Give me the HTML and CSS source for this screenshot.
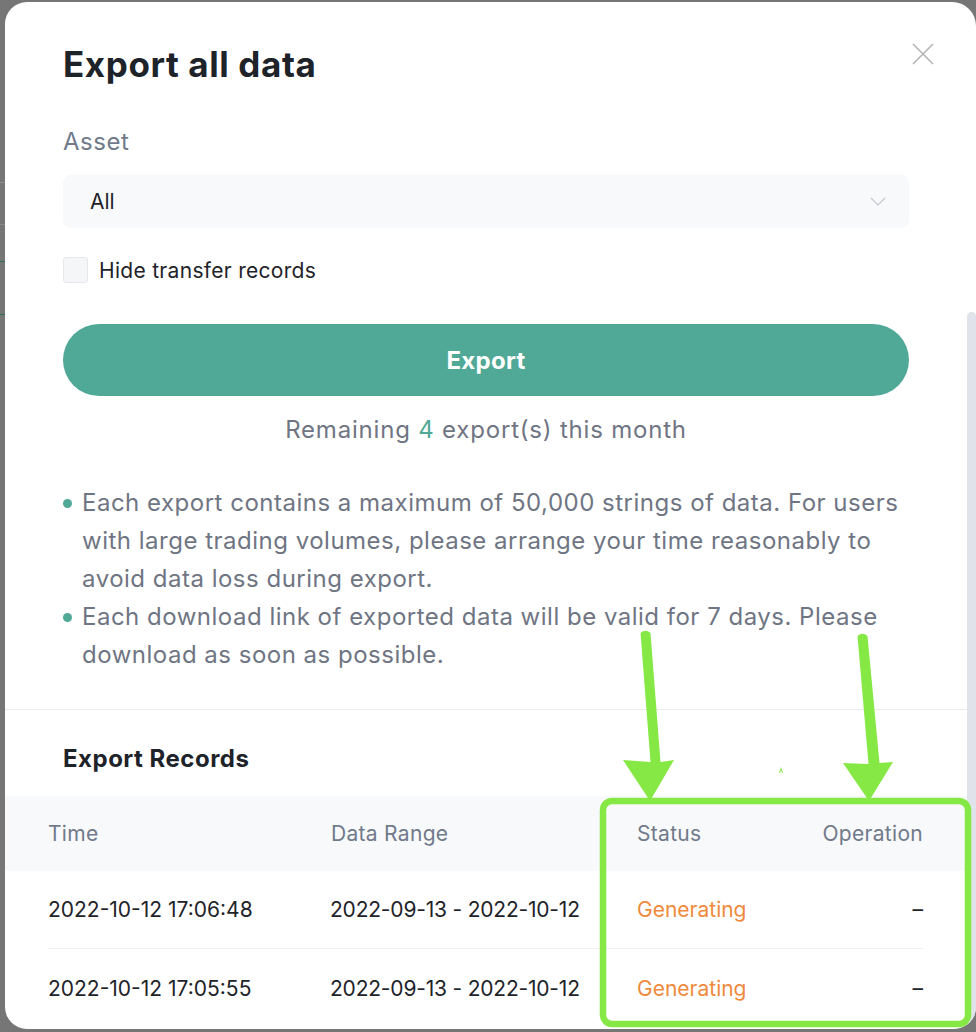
FILE: index.html
```html
<!DOCTYPE html>
<html lang="en">
<head>
<meta charset="utf-8">
<title>Export all data</title>
<link rel="stylesheet" href="styles.css">
</head>
<body>
<div class="backdrop">
  <div class="edge-lines">
    <span class="edge-line l1"></span>
    <span class="edge-line l2"></span>
    <span class="edge-line l3"></span>
    <span class="edge-line l4"></span>
  </div>
  <div class="modal">
    <div class="content">
      <div class="pad">
        <div class="head">
          <h1 class="title">Export all data</h1>
          <button class="close" aria-label="Close">
            <svg width="22" height="22" viewBox="0 0 22 22"><path d="M1 1 L21 21 M21 1 L1 21" stroke="#b4b4b4" stroke-width="1.6" fill="none"/></svg>
          </button>
        </div>
        <div class="label">Asset</div>
        <div class="select">
          <span class="select-value">All</span>
          <svg class="chev" width="16" height="9" viewBox="0 0 16 9"><path d="M1 1 L8 8 L15 1" stroke="#c4c7ce" stroke-width="1.2" fill="none"/></svg>
        </div>
        <label class="check-row">
          <span class="checkbox"></span>
          <span class="check-label">Hide transfer records</span>
        </label>
        <button class="export-btn">Export</button>
        <p class="remaining">Remaining <span class="num">4</span> export(s) this month</p>
        <ul class="notes">
          <li>Each export contains a maximum of 50,000 strings of data. For users with large trading volumes, please arrange your time reasonably to avoid data loss during export.</li>
          <li>Each download link of exported data will be valid for 7 days. Please download as soon as possible.</li>
        </ul>
      </div>
      <div class="divider"></div>
      <div class="pad">
        <h2 class="records-title">Export Records</h2>
      </div>
      <div class="table">
        <div class="thead">
          <div class="row head-row">
            <span>Time</span>
            <span>Data Range</span>
            <span>Status</span>
            <span class="right">Operation</span>
          </div>
        </div>
        <div class="row body-row bordered">
          <span>2022-10-12 17:06:48</span>
          <span class="range">2022-09-13 - 2022-10-12</span>
          <span class="status">Generating</span>
          <span class="right">–</span>
        </div>
        <div class="row body-row">
          <span>2022-10-12 17:05:55</span>
          <span class="range">2022-09-13 - 2022-10-12</span>
          <span class="status">Generating</span>
          <span class="right">–</span>
        </div>
      </div>
    </div>
    <div class="scrollbar"><div class="thumb"></div></div>
  </div>
  <svg class="annot" width="976" height="1032" viewBox="0 0 976 1032">
    <g fill="#86e844">
      <path d="M640.5 633 Q645.5 628.5 650.5 633 L660.5 762 L674 760 L650 801 L623 760 L650.5 762 Z"/>
      <path d="M857.5 636 Q862.5 631.5 867.5 636 L879.5 763 L893 762 L869 801 L843 763 L868.5 764 Z"/>
      <path d="M779 773 L781 767 L783 773 L782 773 L781 770 L780 773 Z"/>
    </g>
    <rect x="603" y="801" width="365" height="223" rx="9" ry="9" fill="none" stroke="#86e844" stroke-width="6.5"/>
  </svg>
</div>
</body>
</html>
```

FILE: styles.css
```css
* { box-sizing: border-box; }
html, body { margin: 0; padding: 0; }
body {
  width: 976px;
  height: 1032px;
  overflow: hidden;
  background: #767676;
  font-family: Inter, "Noto Sans", "Liberation Sans", sans-serif;
  color: #1e2329;
}
.backdrop {
  position: relative;
  width: 976px;
  height: 1032px;
  padding: 2px 0 0 5px;
}
.edge-lines { position: absolute; left: 0; top: 0; width: 5px; height: 1032px; }
.edge-line { position: absolute; left: 0; width: 5px; height: 1px; background: #8a8a8a; }
.edge-line.l1 { top: 182px; }
.edge-line.l2 { top: 224px; }
.edge-line.l3 { top: 261px; background: #2f6b5a; }
.edge-line.l4 { top: 314px; background: #2f6b5a; }

.modal {
  width: 971px;
  height: 1027px;
  background: #fff;
  border-radius: 22px 24px 22px 22px;
  overflow: hidden;
  display: flex;
}
.content {
  width: 962px;
  flex: none;
  padding-top: 42px;
}
.pad { padding: 0 58px; }
.head {
  display: flex;
  justify-content: space-between;
  align-items: flex-start;
  height: 40px;
}
.title {
  margin: 0;
  font-size: 35px;
  line-height: 40px;
  font-weight: 700;
  color: #1e2329;
  letter-spacing: 0.6px;
}
.close {
  border: 0;
  background: none;
  padding: 0;
  margin: 0 -24px 0 0;
  width: 22px;
  height: 22px;
  display: flex;
  transform: translate(1px, -1px);
}
.label {
  margin-top: 44px;
  font-size: 24px;
  line-height: 28px;
  letter-spacing: 0.5px;
  color: #707a8a;
}
.select {
  margin-top: 19px;
  height: 53px;
  background: #f8f9fb;
  border-radius: 8px;
  display: flex;
  align-items: center;
  justify-content: space-between;
  padding: 0 23px 0 27px;
}
.select-value { font-size: 21px; color: #1e2329; }
.check-row {
  margin-top: 29px;
  height: 26px;
  display: flex;
  align-items: center;
  gap: 11px;
}
.checkbox {
  width: 25px;
  height: 26px;
  border: 1px solid #e6e8ec;
  border-radius: 3px;
  background: #f5f6f8;
}
.check-label { font-size: 21px; letter-spacing: 0.3px; color: #1e2329; }
.export-btn {
  display: block;
  width: 100%;
  margin-top: 41px;
  height: 72px;
  border: 0;
  border-radius: 36px;
  background: #50a896;
  color: #fff;
  font-family: inherit;
  font-size: 24px;
  font-weight: 700;
  letter-spacing: 0.3px;
}
.remaining {
  margin: 19px 0 0;
  text-align: center;
  font-size: 24px;
  line-height: 30px;
  letter-spacing: 0.8px;
  color: #6f7583;
}
.num { color: #50a896; }
.notes {
  margin: 39px 0 0;
  padding: 0;
  list-style: none;
}
.notes li {
  position: relative;
  padding-left: 19px;
  font-size: 24px;
  line-height: 38px;
  letter-spacing: 0.5px;
  color: #6f7583;
}
.notes li::before {
  content: "";
  position: absolute;
  left: 0;
  top: 15px;
  width: 9px;
  height: 9px;
  border-radius: 50%;
  background: #50a896;
}
.divider {
  margin-top: 35px;
  height: 1px;
  background: #eaecef;
}
.records-title {
  margin: 34px 0 0;
  font-size: 24px;
  line-height: 30px;
  font-weight: 700;
  letter-spacing: 0.5px;
  color: #1e2329;
}
.table { margin-top: 22px; }
.thead { background: #f8f9fb; }
.row {
  display: grid;
  grid-template-columns: 283px 306px 1fr auto;
  align-items: center;
  margin: 0 44px 0 43px;
  font-size: 21px;
}
.head-row { height: 75px; color: #707a8a; letter-spacing: 0.3px; }
.body-row { height: 79px; color: #1e2329; }
.bordered { height: 78px; border-bottom: 1px solid #f0f1f3; }
.range { letter-spacing: -0.2px; margin-left: -1px; }
.right { text-align: right; }
.status { color: #ef8a3c; }
.scrollbar {
  flex: none;
  width: 9px;
  padding-top: 310px;
}
.thumb {
  height: 100%;
  background: #e1e3ea;
  border-radius: 5px 5px 0 0;
}
.annot {
  position: absolute;
  left: 0;
  top: 0;
  pointer-events: none;
}
```
